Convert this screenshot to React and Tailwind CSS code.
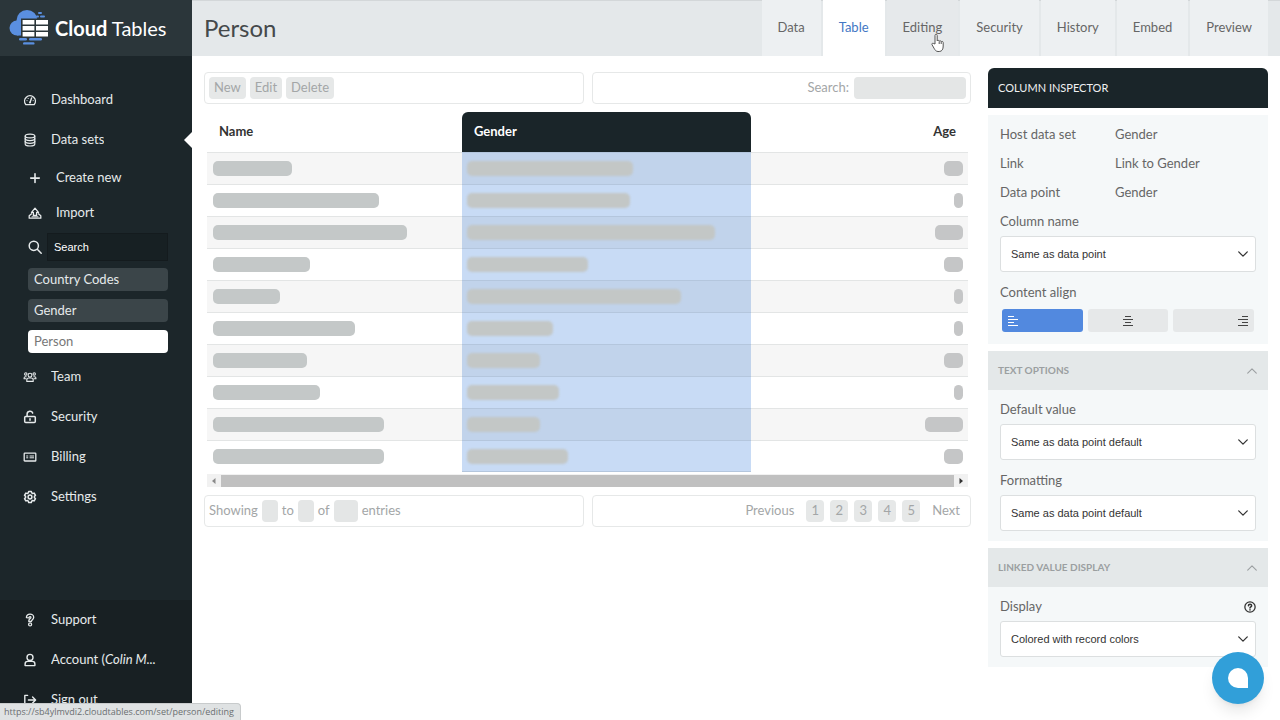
import React, { useState } from 'react';

const tabs = ['Data', 'Table', 'Editing', 'Security', 'History', 'Embed', 'Preview'];

const dataSets = ['Country Codes', 'Gender', 'Person'];

// placeholder bar widths, in pixels
const rows = [
  { name: 79, gender: 166, age: 19 },
  { name: 166, gender: 163, age: 9 },
  { name: 194, gender: 248, age: 28 },
  { name: 97, gender: 121, age: 19 },
  { name: 67, gender: 214, age: 9 },
  { name: 142, gender: 86, age: 9 },
  { name: 94, gender: 73, age: 19 },
  { name: 107, gender: 92, age: 9 },
  { name: 171, gender: 73, age: 38 },
  { name: 171, gender: 101, age: 19 },
];

function Svg({ children, className = 'w-[14px] h-[14px]', strokeWidth = 1.4 }) {
  return (
    <svg className={className} viewBox="0 0 14 14" fill="none" stroke="currentColor" strokeWidth={strokeWidth} strokeLinecap="round" strokeLinejoin="round" aria-hidden="true">
      {children}
    </svg>
  );
}

const icons = {
  dashboard: (
    <Svg>
      <path d="M2.8 11.6a5.4 5.4 0 1 1 8.4 0z" />
      <path d="M7.2 9 8.6 5" />
      <circle cx="7" cy="9.4" r="1" fill="currentColor" stroke="none" />
      <path d="M4 7.6v.1M5.2 5.4v.1M10.2 7.6v.1" strokeWidth="1" />
    </Svg>
  ),
  database: (
    <Svg strokeWidth={1.2}>
      <ellipse cx="7" cy="3" rx="4.8" ry="1.9" />
      <path d="M2.2 3v8c0 1.1 2.1 2 4.8 2s4.8-.9 4.8-2V3" />
      <path d="M2.2 5.6c0 1.1 2.1 2 4.8 2s4.8-.9 4.8-2M2.2 8.3c0 1.1 2.1 2 4.8 2s4.8-.9 4.8-2" />
    </Svg>
  ),
  plus: (
    <Svg strokeWidth={1.6}>
      <path d="M7 2.8v8.6M2.7 7.1h8.6" />
    </Svg>
  ),
  import: (
    <Svg strokeWidth={1.3}>
      <path d="M3.6 7.8 1.2 9.8v2.400h11.600V9.800l-2.400-2" />
      <path d="M5.400 9.400h3.200V6.400h1.900L7 2.200 3.500 6.400h1.900z" />
      <path d="M4 10.800h6" strokeWidth="1" />
    </Svg>
  ),
  search: (
    <Svg strokeWidth={1.5}>
      <circle cx="5.800" cy="5.800" r="4.600" />
      <path d="m9.300 9.300 3.900 3.900" />
    </Svg>
  ),
  team: (
    <Svg strokeWidth={1.1}>
      <circle cx="7" cy="5.2" r="1.9" />
      <circle cx="2.8" cy="4" r="1.2" />
      <circle cx="11.2" cy="4" r="1.2" />
      <path d="M3.8 11.4V10c0-1.2 1-2 2-2h2.4c1 0 2 .8 2 2v1.4zM3.2 6.8H2.4c-.8 0-1.3.5-1.3 1.2v.8h1.8M10.8 6.8h.8c.8 0 1.3.5 1.3 1.2v.8h-1.8" />
    </Svg>
  ),
  lock: (
    <Svg strokeWidth={1.5}>
      <rect x="1.7" y="6.4" width="10.6" height="6.2" rx="1" />
      <path d="M4.100 6.200V4a2.900 2.900 0 0 1 5.600-.9M7 8.800v1.400" />
    </Svg>
  ),
  billing: (
    <Svg strokeWidth={1.3}>
      <rect x="1.2" y="3.2" width="11.6" height="7.8" rx=".6" />
      <path d="M3.6 6h1.2M3.6 7.8h1.2M7 6h3.6M7 7.8h3.6" strokeWidth="1" />
    </Svg>
  ),
  settings: (
    <Svg strokeWidth={1.5}>
      <path d="M5.7 1.4h2.6l.4 1.5 1 .6 1.5-.4 1.3 2.2-1.1 1.1v1.2l1.1 1.1-1.3 2.2-1.5-.4-1 .6-.4 1.5H5.7l-.4-1.5-1-.6-1.5.4-1.3-2.2 1.1-1.1V6.4L1.5 5.3l1.3-2.2 1.5.4 1-.6z" />
      <circle cx="7" cy="7" r="1.9" />
    </Svg>
  ),
  support: (
    <Svg strokeWidth={1.3}>
      <path d="M3.400 4.600C3.400 2.300 5 1.200 7 1.200s3.700 1.200 3.700 3.100c0 2.300-2.200 2.400-2.200 4H5.700c0-2.800 2.200-2.800 2.200-3.900 0-1.100-1.800-1-1.900.4z" />
      <circle cx="7.100" cy="11.400" r="1.500" />
    </Svg>
  ),
  account: (
    <Svg strokeWidth={1.4}>
      <circle cx="7" cy="4.400" r="3" />
      <path d="M4.600 8.400h4.800c1.500 0 2.500 1.100 2.500 2.600v1.600H2.100V11c0-1.500 1-2.600 2.500-2.600z" />
    </Svg>
  ),
  signout: (
    <Svg strokeWidth={1.4}>
      <path d="M4.600 2.400H1.800v9.200h2.800M5.400 7h7M9.600 4 12.600 7l-3 3" />
    </Svg>
  ),
};

function Logo() {
  return (
    <svg className="w-10 h-[38px] shrink-0" viewBox="0 0 40 38" aria-hidden="true">
      <g fill="#5a8fe0">
        <circle cx="8" cy="19" r="7.500" />
        <circle cx="18" cy="11.500" r="10.500" />
        <path d="M8 12h20v14.500H8z" />
        <rect x="29" y="3" width="4" height="2" rx="1" />
        <rect x="27" y="6.600" width="3" height="2" rx="1" />
        <rect x="31" y="6.600" width="5" height="2" rx="1" />
        <rect x="10" y="29" width="8" height="2.400" rx="1.200" />
        <rect x="20" y="29" width="13" height="2.400" rx="1.200" />
        <rect x="14" y="33.200" width="11.500" height="2.400" rx="1.200" />
      </g>
      <path d="M12 9.500h28V28H12z" fill="#2b363a" />
      <g fill="#fff">
        <path d="M13.600 11h11.800v4.400H13.600zM27 11h12v4.400H27zM13.600 17h11.800v4.400H13.600zM27 17h12v4.400H27zM13.600 23h11.800v4.400H13.600zM27 23h12v4.400H27z" />
      </g>
    </svg>
  );
}

function NavItem({ icon, children, active }) {
  return (
    <a href="#" className="relative flex h-10 items-center gap-[14px] pl-[23px] pr-6">
      {icons[icon]}
      <span className="truncate">{children}</span>
      {active && <span className="absolute right-0 top-3 h-4 w-2 bg-white [clip-path:polygon(100%_0,100%_100%,0_50%)]" />}
    </a>
  );
}

function SubItem({ icon, children }) {
  return (
    <a href="#" className="flex h-[35px] items-center gap-[14px] pl-7">
      {icons[icon]}
      <span>{children}</span>
    </a>
  );
}

function Sidebar() {
  return (
    <aside className="flex w-48 shrink-0 flex-col bg-[#1c262a] text-[13px] text-[#e6eaeb]">
      <div className="flex h-14 items-center gap-[6px] bg-[#2b363a] pl-[9px] text-xl text-white">
        <Logo />
        <span><b>Cloud</b> Tables</span>
      </div>
      <nav className="pt-6">
        <NavItem icon="dashboard">Dashboard</NavItem>
        <NavItem icon="database" active>Data sets</NavItem>
        <SubItem icon="plus">Create new</SubItem>
        <SubItem icon="import">Import</SubItem>
        <label className="flex h-[34px] items-center gap-[5px] pl-7 pr-6">
          <span className="shrink-0">{icons.search}</span>
          <input type="text" placeholder="Search" aria-label="Search data sets" className="h-7 w-full min-w-0 border border-[#141b1e] bg-[#172023] px-[6px] font-['Liberation_Sans',sans-serif] text-[11px] text-white placeholder:text-white outline-none" />
        </label>
        <ul className="flex flex-col gap-2 pb-1 pl-7 pr-6 pt-1">
          {dataSets.map((set) => (
            <li key={set}>
              <a href="#" className={set === 'Person' ? 'flex h-[23px] items-center rounded bg-white px-[6px] text-[#777]' : 'flex h-[23px] items-center rounded bg-[#3b4549] px-[6px]'}>
                {set}
              </a>
            </li>
          ))}
        </ul>
        <NavItem icon="team">Team</NavItem>
        <NavItem icon="lock">Security</NavItem>
        <NavItem icon="billing">Billing</NavItem>
        <NavItem icon="settings">Settings</NavItem>
      </nav>
      <nav className="mt-auto bg-[#182023]">
        <NavItem icon="support">Support</NavItem>
        <NavItem icon="account">Account (<i>Colin M...</i></NavItem>
        <NavItem icon="signout">Sign out</NavItem>
      </nav>
    </aside>
  );
}

function Header() {
  return (
    <header className="flex h-14 items-stretch justify-between bg-[#e4e8ea] px-3 shadow-[inset_0_1px_0_#d3d7d9]">
      <h1 className="self-center text-2xl text-[#45494b]">Person</h1>
      <nav className="flex gap-[2px] text-[13px] text-[#666]">
        {tabs.map((tab) => (
          <a
            key={tab}
            href="#"
            className={
              tab === 'Table'
                ? 'flex items-center bg-white px-4 text-[#4377c4]'
                : tab === 'Editing'
                  ? 'relative flex items-center bg-[#e6e9eb] px-4'
                  : 'flex items-center bg-[#edf0f2] px-4'
            }
          >
            {tab}
            {tab === 'Editing' && <Pointer />}
          </a>
        ))}
      </nav>
    </header>
  );
}

function Pointer() {
  return (
    <svg className="absolute right-3 top-[33px] h-5 w-4" viewBox="0 0 16 20" fill="#fff" stroke="#555" strokeWidth="1" strokeLinejoin="round" aria-hidden="true">
      <path d="M5 11V2.500c0-1.800 2.200-1.800 2.200 0V8c.4-1 2-.8 2 .3.500-.9 2-.6 2 .5.600-.8 2-.4 2 .7V13c0 3-1 5.500-4 5.500H8c-2 0-3-1.500-4-3.300l-2-3.500c-.6-1.200.9-2 1.700-1.200z" />
      <path d="M9.200 8.500v2.500M11.200 9v2" fill="none" />
    </svg>
  );
}

function DataTable() {
  const box = 'flex h-8 flex-1 items-center rounded border border-[#e6e8e8] px-1 text-[13px] text-[#a3a6a7]';
  const bar = 'h-[15px] rounded-[5px]';

  return (
    <section className="min-w-0 pt-1">
      <div className="flex gap-2">
        <div className={`${box} gap-1`}>
          <button className="h-[22px] rounded-sm bg-[#e6e8e8] px-[5px]">New</button>
          <button className="h-[22px] rounded-sm bg-[#e6e8e8] px-[5px]">Edit</button>
          <button className="h-[22px] rounded-sm bg-[#e6e8e8] px-[5px]">Delete</button>
        </div>
        <div className={`${box} justify-end`}>
          <label className="flex items-center gap-[5px]">
            Search:
            <input type="text" className="h-[22px] w-28 rounded-sm bg-[#e4e6e6] px-2 outline-none" />
          </label>
        </div>
      </div>

      <div className="mt-2 px-[3px]">
        <table className="w-full table-fixed border-separate border-spacing-0">
          <colgroup>
            <col className="w-[33.5%]" />
            <col className="w-[38%]" />
            <col />
          </colgroup>
          <thead>
            <tr className="h-10 text-[13px] text-[#333]">
              <th className="px-3 text-left">Name</th>
              <th className="rounded-t-md bg-[#1a2529] px-3 text-left text-white">Gender</th>
              <th className="px-3 text-right">Age</th>
            </tr>
          </thead>
          <tbody>
            {rows.map((row, i) => (
              <tr key={i} className="group h-8 odd:bg-[#f6f6f6]">
                <td className="border-t border-[#e3e5e5] px-[6px]">
                  <div className={`${bar} bg-[#c4c8c8]`} style={{ width: row.name }} />
                </td>
                <td className="border-t border-[#b4c6dd] bg-[#c8dbf5] px-[5px] group-odd:bg-[#c1d3eb] group-last:border-b">
                  <div className={`${bar} bg-[#c3c7c6] blur-[1px]`} style={{ width: row.gender }} />
                </td>
                <td className="border-t border-[#e3e5e5] px-[5px]">
                  <div className={`${bar} ml-auto bg-[#c5c6c7]`} style={{ width: row.age }} />
                </td>
              </tr>
            ))}
          </tbody>
        </table>
        <div className="mt-[2px] flex h-[13px] items-center bg-[#f1f1f1]">
          <svg className="w-[14px] h-3" viewBox="0 0 14 12" aria-hidden="true"><path d="M8.500 3v6L5 6z" fill="#8a8a8a" /></svg>
          <div className="h-3 flex-1 bg-[#c0c0c0]" />
          <svg className="w-[14px] h-3" viewBox="0 0 14 12" aria-hidden="true"><path d="M5.500 3v6L9 6z" fill="#333" /></svg>
        </div>
      </div>

      <div className="mt-2 flex gap-2">
        <div className={`${box} gap-1`}>
          Showing <span className="h-[22px] w-4 rounded-sm bg-[#e4e6e6]" />
          to <span className="h-[22px] w-4 rounded-sm bg-[#e4e6e6]" />
          of <span className="h-[22px] w-6 rounded-sm bg-[#e4e6e6]" />
          entries
        </div>
        <div className={`${box} justify-end gap-[6px]`}>
          <button className="px-[6px]">Previous</button>
          {[1, 2, 3, 4, 5].map((page) => (
            <button key={page} className="h-[22px] w-[18px] rounded-sm bg-[#e6e8e8]">{page}</button>
          ))}
          <button className="px-[6px]">Next</button>
        </div>
      </div>
    </section>
  );
}

function SelectField({ id, label, value, help }) {
  return (
    <div className="mb-[6px] last:mb-0">
      <div className="flex h-[29px] items-center justify-between">
        <label htmlFor={id}>{label}</label>
        {help && (
          <button aria-label="Help" className="text-[#333]">
            <Svg className="h-3 w-3" strokeWidth={1.5}>
              <circle cx="7" cy="7" r="6" />
              <path d="M5.200 5.600c0-2.400 3.700-2.300 3.700-.1C8.900 7 7 6.800 7 8.200M7 10.300v.1" strokeWidth="1.800" />
            </Svg>
          </button>
        )}
      </div>
      <div className="relative">
        <select id={id} className="h-9 w-full appearance-none rounded-[3px] border border-[#dcdfe0] bg-white px-[10px] font-['Liberation_Sans',sans-serif] text-[11px] text-[#333]">
          <option>{value}</option>
        </select>
        <Svg className="pointer-events-none absolute right-[7px] top-3 h-3 w-3" strokeWidth={1.5}>
          <path d="m2 4.500 5 5 5-5" stroke="#333" />
        </Svg>
      </div>
    </div>
  );
}

function SectionHeader({ children, open, onToggle }) {
  return (
    <button onClick={onToggle} aria-expanded={open} className="flex h-[39px] items-center justify-between bg-[#e4e8e9] px-[10px] text-[10px] font-bold uppercase text-[#9b9fa1]">
      {children}
      <Svg className="h-3 w-3" strokeWidth={1.3}>
        <path d={open ? 'm2 9.500 5-5 5 5' : 'm2 4.500 5 5 5-5'} />
      </Svg>
    </button>
  );
}

function AlignIcon({ d }) {
  return (
    <svg className="h-3 w-3" viewBox="0 0 12 12" fill="none" stroke="currentColor" strokeWidth="1.200" aria-hidden="true">
      <path d={d} />
    </svg>
  );
}

function Inspector() {
  const [textOpen, setTextOpen] = useState(true);
  const [linkedOpen, setLinkedOpen] = useState(true);
  const panel = 'bg-[#f5f8f9] px-3 pb-[10px] pt-[5px]';

  return (
    <aside className="flex flex-col gap-[7px] text-[13px] text-[#666]">
      <h2 className="flex h-10 items-center rounded-t-md bg-[#1a2529] px-[10px] text-[11px] text-[#eef0f1]">COLUMN INSPECTOR</h2>
      <div className={panel}>
        <dl className="grid grid-cols-[115px_1fr] auto-rows-[29px] items-center">
          <dt>Host data set</dt>
          <dd>Gender</dd>
          <dt>Link</dt>
          <dd>Link to Gender</dd>
          <dt>Data point</dt>
          <dd>Gender</dd>
        </dl>
        <SelectField id="column-name" label="Column name" value="Same as data point" />
        <div role="group" aria-labelledby="content-align">
          <div id="content-align" className="flex h-[29px] items-center">Content align</div>
          <div className="flex gap-[5px] p-[2px]">
            <button aria-label="Left" className="flex h-[23px] flex-1 items-center justify-start rounded-[3px] bg-[#5289df] px-[5px] text-white">
              <AlignIcon d="M1 1.500h6M1 4.500h10M1 7.500h6M1 10.500h10" />
            </button>
            <button aria-label="Center" className="flex h-[23px] flex-1 items-center justify-center rounded-[3px] bg-[#e6e8e9] px-[5px] text-[#444]">
              <AlignIcon d="M3 1.500h6M1 4.500h10M3 7.500h6M1 10.500h10" />
            </button>
            <button aria-label="Right" className="flex h-[23px] flex-1 items-center justify-end rounded-[3px] bg-[#e6e8e9] px-[5px] text-[#444]">
              <AlignIcon d="M5 1.500h6M1 4.500h10M5 7.500h6M1 10.500h10" />
            </button>
          </div>
        </div>
      </div>

      <div className="flex flex-col">
        <SectionHeader open={textOpen} onToggle={() => setTextOpen(!textOpen)}>Text options</SectionHeader>
        {textOpen && (
          <div className={panel}>
            <SelectField id="default-value" label="Default value" value="Same as data point default" />
            <SelectField id="formatting" label="Formatting" value="Same as data point default" />
          </div>
        )}
      </div>

      <div className="flex flex-col">
        <SectionHeader open={linkedOpen} onToggle={() => setLinkedOpen(!linkedOpen)}>Linked value display</SectionHeader>
        {linkedOpen && (
          <div className={panel}>
            <SelectField id="display" label="Display" value="Colored with record colors" help />
          </div>
        )}
      </div>
    </aside>
  );
}

function App() {
  return (
    <div className="flex h-screen overflow-hidden bg-white font-['Lato',sans-serif]">
      <Sidebar />
      <div className="flex min-w-0 flex-1 flex-col">
        <Header />
        <main className="grid grid-cols-[minmax(0,1fr)_280px] items-start gap-[17px] p-3">
          <DataTable />
          <Inspector />
        </main>
      </div>

      {/* Chat launcher */}
      <button aria-label="Open chat" className="fixed bottom-4 right-4 flex h-[52px] w-[52px] items-center justify-center rounded-full bg-[#319fd9] shadow-lg">
        <span className="h-5 w-5 rounded-full rounded-br-none bg-white" />
      </button>

      {/* Link status */}
      <div className="fixed bottom-0 left-0 h-[17px] rounded-tr-sm border-r border-t border-[#c8cbcc] bg-[#dfe2e3] pl-1 pr-[6px] font-['Open_Sans',sans-serif] text-[9px] leading-4 text-[#6b6f71]">
        https://sb4ylmvdi2.cloudtables.com/set/person/editing
      </div>
    </div>
  );
}

export default App;
